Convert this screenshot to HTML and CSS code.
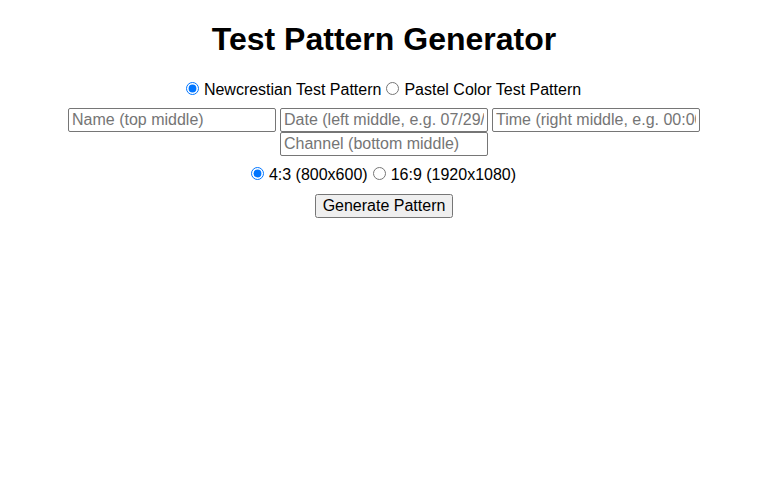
FILE: index.html
```html
<!DOCTYPE html>
<html>
<head>
<meta charset="utf-8">
<link rel="stylesheet" href="styles.css">
</head>
<body>
<h1 class="title">Test Pattern Generator</h1>
<div class="row radios"><input class="radio" type="radio" id="t1" name="type" checked><label for="t1">Newcrestian Test Pattern</label><input class="radio" type="radio" id="t2" name="type"><label for="t2">Pastel Color Test Pattern</label></div>
<div class="fields">
<input class="field" type="text" placeholder="Name (top middle)">
<input class="field" type="text" placeholder="Date (left middle, e.g. 07/29/2024)">
<input class="field" type="text" placeholder="Time (right middle, e.g. 00:00)">
<input class="field" type="text" placeholder="Channel (bottom middle)">
</div>
<div class="row radios2"><input class="radio" type="radio" id="r1" name="ratio" checked><label for="r1">4:3 (800x600)</label><input class="radio" type="radio" id="r2" name="ratio"><label for="r2">16:9 (1920x1080)</label></div>
<div class="row">
<button class="gen">Generate Pattern</button>
</div>
</body>
</html>
```
FILE: styles.css
```css
html, body {
  margin: 0;
  padding: 0;
  background: #fff;
}
body {
  font-family: "Liberation Sans", Arial, sans-serif;
  font-size: 16px;
  text-align: center;
  color: #000;
  padding-top: 21px;
}
.title {
  font-size: 32px;
  font-weight: bold;
  margin: 0 0 21px 0;
  line-height: 37px;
}
.row {
  line-height: 18px;
}
.radio {
  margin: 3px 5px 0 5px;
}
.radios {
  margin-bottom: 9px;
  padding-right: 6px;
}
.fields {
  width: 640px;
  margin: 0 auto 8px auto;
  display: flex;
  flex-wrap: wrap;
  justify-content: center;
  column-gap: 4px;
  row-gap: 0;
}
.field {
  box-sizing: border-box;
  width: 208px;
  height: 24px;
  margin: 0;
  font-family: "Liberation Sans", Arial, sans-serif;
  font-size: 16px;
  padding: 1px 3px;
  border: 1px solid #767676;
  border-radius: 2px;
}
.radios2 {
  margin-bottom: 10px;
  padding-right: 6px;
}
.gen {
  font-family: "Liberation Sans", Arial, sans-serif;
  font-size: 16px;
  height: 24px;
  padding: 1px 6px;
}
```
